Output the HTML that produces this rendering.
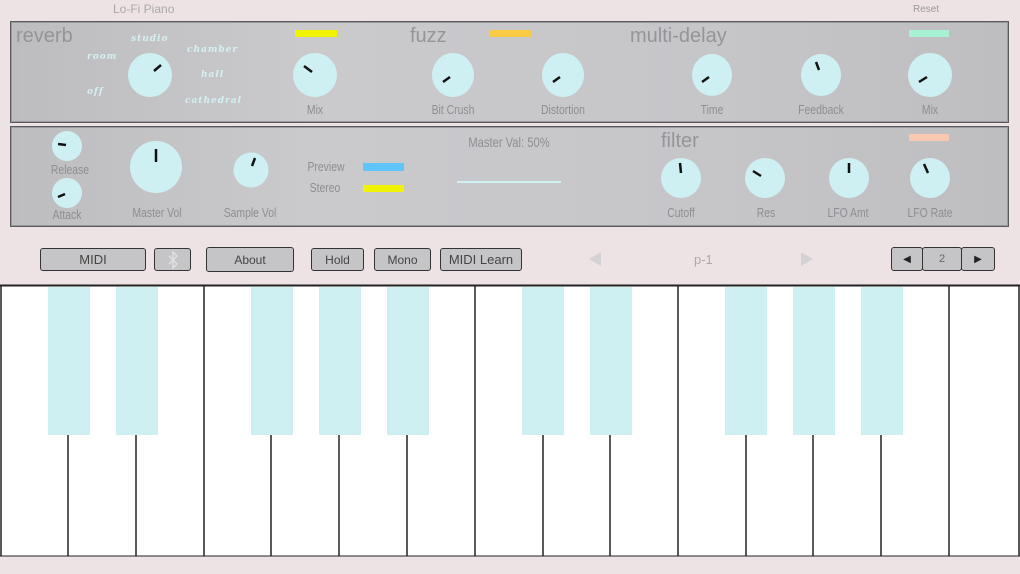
<!DOCTYPE html>
<html><head><meta charset="utf-8"><style>
body{margin:0;width:1020px;height:574px;background:#ede3e5;position:relative;overflow:hidden;font-family:"Liberation Sans",sans-serif;}
.a{position:absolute}
.panel{position:absolute;background:linear-gradient(90deg,#bdbdc0 0%,#cacacd 30%,#c6c6c9 70%,#bebec1 100%);border:1px solid #5a5a5e;box-shadow:inset 0 0 0 1px #9a9a9e;}
.lab{position:absolute;color:#8e8e92;font-size:13px;transform:translateX(-50%) scaleX(.8);white-space:nowrap}
.title{position:absolute;color:#959599;font-size:20px}
.btn{position:absolute;background:#c5c5c8;border:1.5px solid #333;border-radius:3px;box-sizing:border-box;color:#444;font-size:12px;display:flex;align-items:center;justify-content:center}
.script{position:absolute;color:#d3f1f3;font-family:"DejaVu Serif",serif;font-style:italic;font-size:9px;font-weight:bold;letter-spacing:1px}
</style></head><body>
<div class="a" style="left:113px;top:2px;color:#aaa;font-size:12px">Lo-Fi Piano</div>
<div class="a" style="left:913px;top:4px;color:#999;font-size:10px">Reset</div>

<div class="panel" style="left:10px;top:21px;width:997px;height:100px"></div>
<div class="panel" style="left:10px;top:126px;width:997px;height:99px"></div>

<div class="title" style="left:16px;top:25px">reverb</div>
<div class="title" style="left:410px;top:25px">fuzz</div>
<div class="title" style="left:630px;top:25px">multi-delay</div>
<div class="title" style="left:661px;top:130px">filter</div>
<div class="a" style="left:295px;top:30px;width:42px;height:7px;background:#f0f400"></div>
<div class="a" style="left:489px;top:30px;width:42px;height:7px;background:#fbcb45"></div>
<div class="a" style="left:909px;top:30px;width:40px;height:7px;background:#a6f2d2"></div>
<div class="a" style="left:909px;top:134px;width:40px;height:7px;background:#f9c8af"></div>

<div class="script" style="left:87px;top:52px">room</div>
<div class="script" style="left:131px;top:34px">studio</div>
<div class="script" style="left:187px;top:45px">chamber</div>
<div class="script" style="left:201px;top:70px">hall</div>
<div class="script" style="left:185px;top:96px">cathedral</div>
<div class="script" style="left:87px;top:87px">off</div>

<div class="lab" style="left:315px;top:102px">Mix</div>
<div class="lab" style="left:453px;top:102px">Bit Crush</div>
<div class="lab" style="left:563px;top:102px">Distortion</div>
<div class="lab" style="left:712px;top:102px">Time</div>
<div class="lab" style="left:821px;top:102px">Feedback</div>
<div class="lab" style="left:930px;top:102px">Mix</div>
<div class="lab" style="left:70px;top:162px">Release</div>
<div class="lab" style="left:67px;top:207px">Attack</div>
<div class="lab" style="left:157px;top:205px">Master Vol</div>
<div class="lab" style="left:250px;top:205px">Sample Vol</div>
<div class="lab" style="left:326px;top:159px">Preview</div>
<div class="lab" style="left:325px;top:180px">Stereo</div>
<div class="lab" style="left:509px;top:134px;font-size:14px">Master Val: 50%</div>
<div class="lab" style="left:681px;top:205px">Cutoff</div>
<div class="lab" style="left:766px;top:205px">Res</div>
<div class="lab" style="left:848px;top:205px">LFO Amt</div>
<div class="lab" style="left:930px;top:205px">LFO Rate</div>
<div class="a" style="left:363px;top:163px;width:41px;height:8px;background:#5fc4fa"></div>
<div class="a" style="left:363px;top:185px;width:41px;height:7px;background:#f0f400"></div>
<div class="a" style="left:457px;top:181px;width:104px;height:2px;background:#cff0f2"></div>

<svg class="a" style="left:0;top:0" width="1020" height="574">
<g fill="#cff0f2" stroke="#111" stroke-width="2.5" stroke-linecap="butt">
<g transform="translate(150,75)"><ellipse rx="22" ry="22" stroke="none"/><line x1="4" y1="-4" x2="11" y2="-10"/></g>
<g transform="translate(315,75)"><ellipse rx="22" ry="22" stroke="none"/><line x1="-3" y1="-3" x2="-11" y2="-9"/></g>
<g transform="translate(453,75)"><ellipse rx="21" ry="22" stroke="none"/><line x1="-3" y1="2" x2="-10" y2="7"/></g>
<g transform="translate(563,75)"><ellipse rx="21" ry="22" stroke="none"/><line x1="-3" y1="2" x2="-10" y2="7"/></g>
<g transform="translate(712,75)"><ellipse rx="20" ry="21" stroke="none"/><line x1="-3" y1="2" x2="-10" y2="7"/></g>
<g transform="translate(821,75)"><ellipse rx="20" ry="21" stroke="none"/><line x1="-2" y1="-5" x2="-5" y2="-13"/></g>
<g transform="translate(930,75)"><ellipse rx="22" ry="22" stroke="none"/><line x1="-3" y1="2" x2="-11" y2="7"/></g>
<g transform="translate(67,146)"><ellipse rx="15" ry="15" stroke="none"/><line x1="-1" y1="-1" x2="-9" y2="-2"/></g>
<g transform="translate(67,193)"><ellipse rx="15" ry="15" stroke="none"/><line x1="-2" y1="1" x2="-9" y2="4"/></g>
<g transform="translate(156,167)"><ellipse rx="26" ry="26" stroke="none"/><line x1="0" y1="-5" x2="0" y2="-18"/></g>
<g transform="translate(251,170)"><ellipse rx="17.5" ry="17.5" stroke="none"/><line x1="1" y1="-4" x2="4" y2="-12"/></g>
<g transform="translate(681,178)"><ellipse rx="20" ry="20" stroke="none"/><line x1="0" y1="-5" x2="-1" y2="-15"/></g>
<g transform="translate(765,178)"><ellipse rx="20" ry="20" stroke="none"/><line x1="-4" y1="-2" x2="-12" y2="-7"/></g>
<g transform="translate(849,178)"><ellipse rx="20" ry="20" stroke="none"/><line x1="0" y1="-5" x2="0" y2="-15"/></g>
<g transform="translate(930,178)"><ellipse rx="20" ry="20" stroke="none"/><line x1="-2" y1="-5" x2="-6" y2="-14"/></g>
</g>
<polygon points="589,259 601,252 601,266" fill="#d3d3d3"/>
<polygon points="813,259 801,252 801,266" fill="#d3d3d3"/>
<rect x="0" y="285" width="1020" height="271" fill="#fff"/>
<line x1="0" y1="285.5" x2="1020" y2="285.5" stroke="#222" stroke-width="2"/>
<line x1="0" y1="556" x2="1020" y2="556" stroke="#222" stroke-width="1"/>
<g stroke="#222" stroke-width="1.5">
<line x1="1" y1="285" x2="1" y2="556"/>
<line x1="68" y1="435" x2="68" y2="556"/><line x1="136" y1="435" x2="136" y2="556"/>
<line x1="204" y1="285" x2="204" y2="556"/>
<line x1="271" y1="435" x2="271" y2="556"/><line x1="339" y1="435" x2="339" y2="556"/><line x1="407" y1="435" x2="407" y2="556"/>
<line x1="475" y1="285" x2="475" y2="556"/>
<line x1="543" y1="435" x2="543" y2="556"/><line x1="610" y1="435" x2="610" y2="556"/>
<line x1="678" y1="285" x2="678" y2="556"/>
<line x1="746" y1="435" x2="746" y2="556"/><line x1="813" y1="435" x2="813" y2="556"/><line x1="881" y1="435" x2="881" y2="556"/>
<line x1="949" y1="285" x2="949" y2="556"/>
<line x1="1019" y1="285" x2="1019" y2="556"/>
</g>
<g fill="#cff0f2">
<rect x="48" y="287" width="42" height="148"/><rect x="116" y="287" width="42" height="148"/>
<rect x="251" y="287" width="42" height="148"/><rect x="319" y="287" width="42" height="148"/><rect x="387" y="287" width="42" height="148"/>
<rect x="522" y="287" width="42" height="148"/><rect x="590" y="287" width="42" height="148"/>
<rect x="725" y="287" width="42" height="148"/><rect x="793" y="287" width="42" height="148"/><rect x="861" y="287" width="42" height="148"/>
</g>
</svg>

<div class="btn" style="left:40px;top:248px;width:106px;height:23px;font-size:13px">MIDI</div>
<div class="btn" style="left:154px;top:248px;width:37px;height:23px"><svg width="12" height="18" viewBox="0 0 12 18"><path d="M2 5 L10 13 L6 17 L6 1 L10 5 L2 13" fill="none" stroke="#e2e2e4" stroke-width="1.3"/></svg></div>
<div class="btn" style="left:206px;top:247px;width:88px;height:25px">About</div>
<div class="btn" style="left:311px;top:248px;width:53px;height:23px">Hold</div>
<div class="btn" style="left:374px;top:248px;width:57px;height:23px">Mono</div>
<div class="btn" style="left:440px;top:248px;width:82px;height:23px;font-size:13px">MIDI Learn</div>
<div class="a" style="left:694px;top:252px;color:#aaa;font-size:13px">p-1</div>
<div class="btn" style="left:891px;top:247px;width:32px;height:24px;font-size:10px;color:#222">◀</div>
<div class="btn" style="left:922px;top:247px;width:40px;height:24px;font-size:11px;color:#666">2</div>
<div class="btn" style="left:961px;top:247px;width:34px;height:24px;font-size:10px;color:#222">▶</div>
</body></html>
